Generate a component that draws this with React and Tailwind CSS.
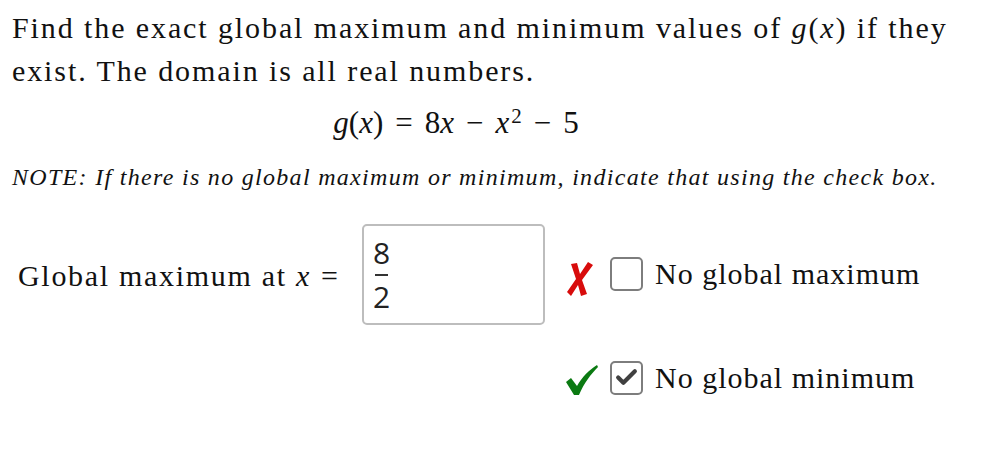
import { Check } from 'lucide-react';

const serif = { fontFamily: '"Liberation Serif", "DejaVu Serif", serif' };

function Var({ children }) {
    return <i>{children}</i>;
}

function Op({ children, gap = 'mx-[12px]' }) {
    return <span className={gap}>{children}</span>;
}

function CheckRow({ checked, label }) {
    return (
        <div className="flex items-center">
            <div className="w-[45px] h-[36px] flex items-center">
                {checked ? (
                    <svg width="34" height="32" viewBox="0 0 34 32" className="mt-[6px]">
                        <path d="M1 17 L6 13 L12 21 C17 12 24 5 32 0 L33 2 C26 9 19 18 14 30 L9 30 Z" fill="#0b7a12" />
                    </svg>
                ) : (
                    <svg width="27" height="36" viewBox="0 0 27 36" className="mt-[10px] ml-[2px]">
                        <path d="M4 3 L10 2 L13 13 L21 1 L26 4 L15 19 L20 33 L14 35 L11 24 L4 35 L0 31 L9 18 Z" fill="#d80c0c" />
                    </svg>
                )}
            </div>
            <div className="w-[33px] h-[34px] rounded-[5px] border-2 border-[#7d7d7d] bg-white flex items-center justify-center">
                {checked && <Check size={25} strokeWidth={4} className="text-[#404040]" />}
            </div>
            <span className="ml-[12px] text-[30px] tracking-[1px] text-[#111]">{label}</span>
        </div>
    );
}

export default function App() {
    return (
        <div className="w-[988px] h-[460px] bg-white text-[#111] overflow-hidden" style={serif}>
            <div className="pt-[6px] pl-[12px]">
                <p className="text-[30px] leading-[43px] tracking-[1.9px] whitespace-nowrap">
                    Find the exact global maximum and minimum values of <Var>g</Var>(<Var>x</Var>) if they
                    <br />
                    exist. The domain is all real numbers.
                </p>
                <p className="text-center text-[31px] leading-[36px] mt-[13px] pr-[88px]">
                    <Var>g</Var>(<Var>x</Var>)<Op>=</Op>8<Var>x</Var><Op>−</Op><Var>x</Var><sup className="text-[21px] ml-[2px]">2</sup><Op>−</Op>5
                </p>
                <p className="italic text-[24px] leading-[30px] mt-[21px] tracking-[1.3px] whitespace-nowrap">
                    NOTE: If there is no global maximum or minimum, indicate that using the check box.
                </p>
            </div>

            <div className="flex items-start mt-[32px] pl-[18px]">
                <div className="w-[344px] h-[101px] flex items-center">
                    <span className="text-[30px] tracking-[1.7px] pt-[1px]">Global maximum at <Var>x</Var><Op gap="ml-[10px]">=</Op></span>
                </div>
                <div className="w-[183px] h-[101px] rounded-[5px] border-2 border-[#bdbdbd] flex items-center pl-[9px]">
                    <div className="flex flex-col items-center font-['Open_Sans',sans-serif] text-[30px] leading-[30px] text-[#222]">
                        <span>8</span>
                        <span className="w-[13px] h-[2px] bg-[#333] my-[6px]"></span>
                        <span>2</span>
                    </div>
                </div>
                <div className="ml-[20px] mt-[27px]">
                    <CheckRow checked={false} label="No global maximum" />
                </div>
            </div>

            <div className="pl-[565px] mt-[30px]">
                <CheckRow checked={true} label="No global minimum" />
            </div>
        </div>
    );
}
